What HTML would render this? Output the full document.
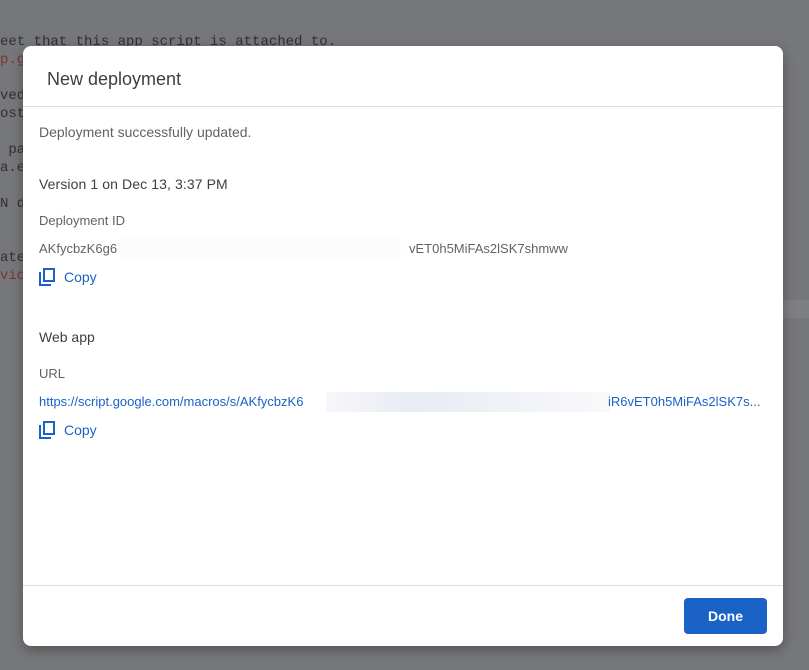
<!DOCTYPE html>
<html><head><style>
*{margin:0;padding:0;box-sizing:border-box}
body{width:809px;height:670px;background:#76777a;position:relative;overflow:hidden;font-family:"Liberation Sans",sans-serif}
.code{position:absolute;left:0;font-family:"Liberation Mono",monospace;font-size:14px;color:#303030;white-space:pre}
.dlg{position:absolute;left:23px;top:46px;width:760px;height:600px;background:#fff;border-radius:8px;box-shadow:0 4px 12px rgba(0,0,0,.3)}
.t{position:absolute;white-space:nowrap}
.hr{position:absolute;left:0;right:0;height:1px;background:#dadce0}
.copy{position:absolute;left:16px;color:#1a62c6;font-size:14px;display:flex;align-items:center}
.copy svg{margin-right:9px}
</style></head><body>
<div class="code" style="top:34px">eet that this app script is attached to.</div>
<div class="code" style="top:52px;color:#7a3535">p.g</div>
<div class="code" style="top:88px">ved</div>
<div class="code" style="top:106px">ost</div>
<div class="code" style="top:142px"> pa</div>
<div class="code" style="top:160px">a.e</div>
<div class="code" style="top:196px">N d</div>
<div class="code" style="top:250px">ate</div>
<div class="code" style="top:268px;color:#7a3535">vic</div>
<div style="position:absolute;left:783px;right:0;top:300px;height:18px;background:#7e7f82"></div>
<div class="dlg">
<div class="t" style="left:24px;top:23px;font-size:18px;color:#3c4043">New deployment</div>
<div class="hr" style="top:60px"></div>
<div class="t" style="left:16px;top:78px;font-size:14px;color:#5f6368">Deployment successfully updated.</div>
<div class="t" style="left:16px;top:130px;font-size:14px;color:#3c4043;font-weight:500;letter-spacing:0.1px">Version 1 on Dec 13, 3:37 PM</div>
<div class="t" style="left:16px;top:167px;font-size:13px;color:#5f6368">Deployment ID</div>
<div class="t" style="left:16px;top:195px;font-size:13px;color:#5f6368">AKfycbzK6g6</div>
<div style="position:absolute;left:96px;top:192px;width:282px;height:20px;background:#fcfcfd"></div>
<div class="t" style="left:386px;top:195px;font-size:13px;color:#5f6368">vET0h5MiFAs2lSK7shmww</div>
<div class="copy" style="top:222px"><svg width="16" height="18" viewBox="0 0 16 18"><path d="M1 4v13h11" fill="none" stroke="#1a62c6" stroke-width="2"/><rect x="5" y="1" width="10" height="12" fill="none" stroke="#1a62c6" stroke-width="2"/></svg>Copy</div>
<div class="t" style="left:16px;top:283px;font-size:14px;color:#3c4043">Web app</div>
<div class="t" style="left:16px;top:320px;font-size:13px;color:#5f6368">URL</div>
<div class="t" style="left:16px;top:348px;font-size:13px;color:#1a62c6">https://script.google.com/macros/s/AKfycbzK6</div>
<div style="position:absolute;left:303px;top:346px;width:284px;height:20px;background:linear-gradient(90deg,#f6f7fa,#e8ecf3 30%,#eef1f6 60%,#f8f9fb)"></div>
<div class="t" style="left:585px;top:348px;font-size:13px;color:#1a62c6">iR6vET0h5MiFAs2lSK7s...</div>
<div class="copy" style="top:375px"><svg width="16" height="18" viewBox="0 0 16 18"><path d="M1 4v13h11" fill="none" stroke="#1a62c6" stroke-width="2"/><rect x="5" y="1" width="10" height="12" fill="none" stroke="#1a62c6" stroke-width="2"/></svg>Copy</div>
<div class="hr" style="top:539px"></div>
<div style="position:absolute;left:661px;top:552px;width:83px;height:36px;background:#1a62c6;border-radius:4px;color:#fff;font-size:14px;font-weight:bold;display:flex;align-items:center;justify-content:center">Done</div>
</div>
</body></html>
